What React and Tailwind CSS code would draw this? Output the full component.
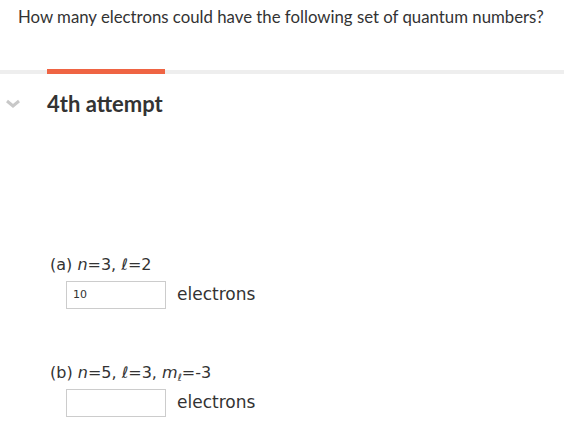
import React from "react";

const Ell = () => <span className="italic">ℓ</span>;

const Part = ({ label, children, value, className = "" }) => (
  <div className={className}>
    <div className="text-[16px] leading-[20px] text-[#333] pl-[50px]" style={{ fontFamily: "'DejaVu Sans', sans-serif" }}>
      {label} {children}
    </div>
    <div className="flex items-center mt-[6px] pl-[66px]">
      <div className="w-[100px] h-[28px] border border-[#ccc] bg-white flex items-center px-[6px] text-[11px] text-[#333]" style={{ fontFamily: "'DejaVu Sans', sans-serif" }}>
        {value}
      </div>
      <span className="ml-[11px] text-[17px] text-[#333]" style={{ fontFamily: "'DejaVu Sans', sans-serif" }}>electrons</span>
    </div>
  </div>
);

export default function App() {
  return (
    <div className="w-[564px] h-[437px] bg-white overflow-hidden" style={{ fontFamily: "Lato, sans-serif" }}>
      <p className="pt-[6px] pl-[18px] text-[16.8px] leading-[22px] text-[#333]">
        How many electrons could have the following set of quantum numbers?
      </p>

      <div className="mt-[41px] relative h-[5px]">
        <div className="absolute left-0 right-0 top-[1px] h-[4px] bg-[#eeeeee]" />
        <div className="absolute left-[47px] top-0 w-[118px] h-[5px] bg-[#ef6443]" />
      </div>

      <div className="flex items-center mt-[17px] h-[26px]">
        <svg className="ml-[5px]" width="16" height="10" viewBox="0 0 16 10">
          <path d="M2 2 L8 7 L14 2" fill="none" stroke="#c8c8c8" strokeWidth="3" />
        </svg>
        <h2 className="ml-[26px] text-[22px] font-bold text-[#333] leading-[26px]">4th attempt</h2>
      </div>

      <Part className="mt-[138px]" label="(a)" value="10">
        <span className="italic">n</span>=3, <Ell />=2
      </Part>

      <Part className="mt-[54px]" label="(b)" value="">
        <span className="italic">n</span>=5, <Ell />=3, <span className="italic">m</span>
        <sub className="text-[10px]"><Ell /></sub>=-3
      </Part>
    </div>
  );
}
